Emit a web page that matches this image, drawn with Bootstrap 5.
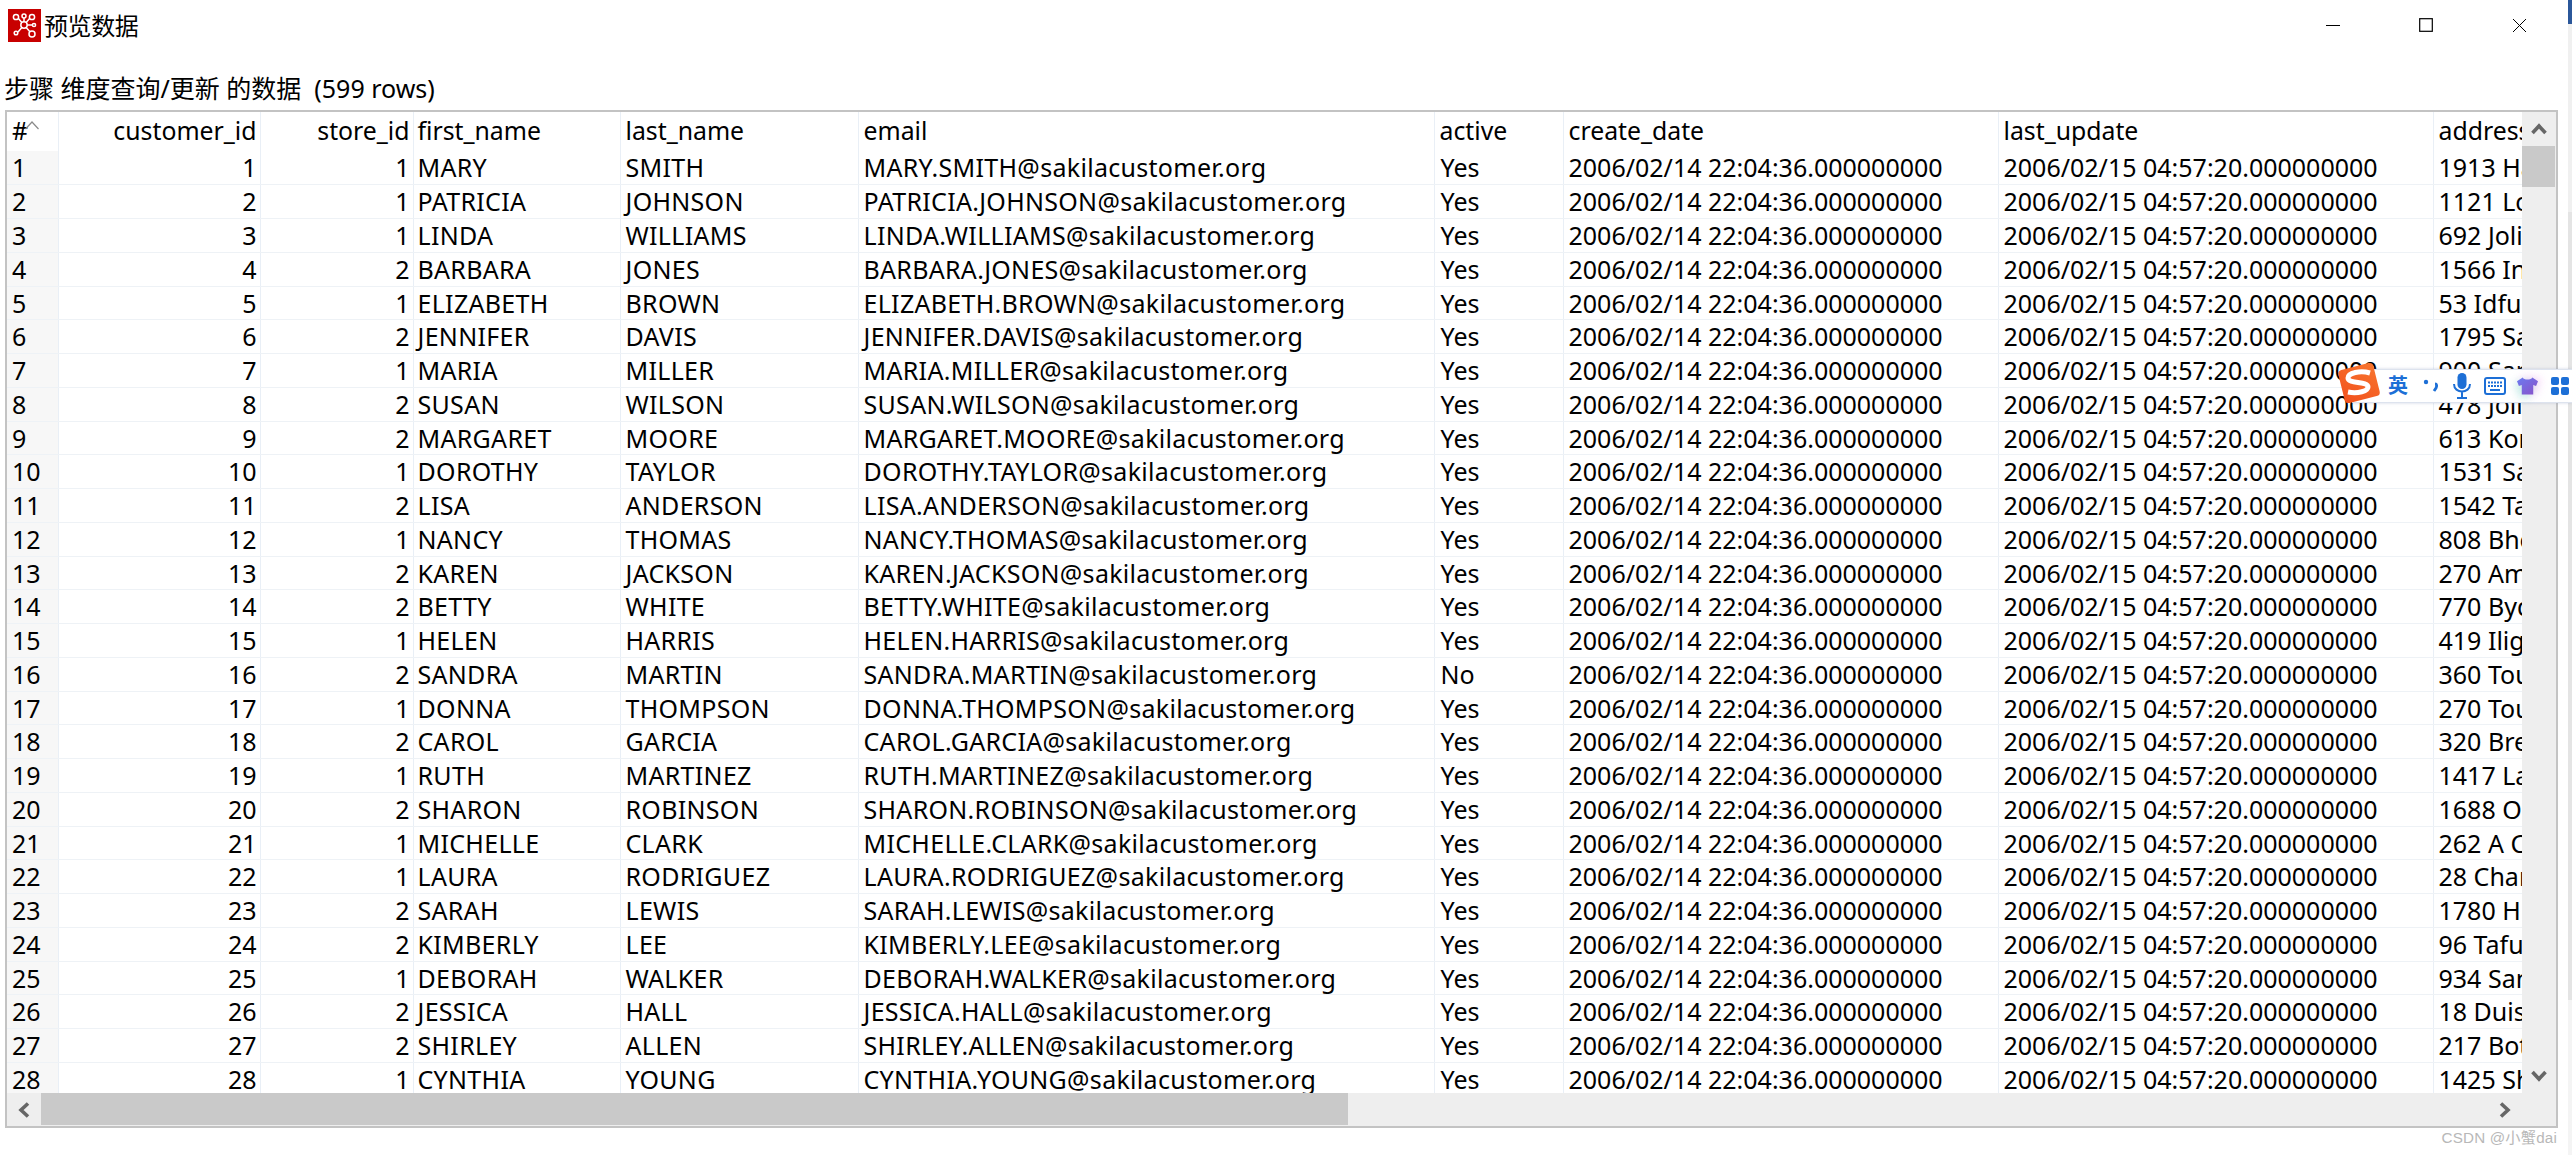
<!DOCTYPE html>
<html lang="zh">
<head>
<meta charset="utf-8">
<title>预览数据</title>
<link href="https://cdn.jsdelivr.net/npm/bootstrap@5.3.0/dist/css/bootstrap.min.css" rel="stylesheet">
<style>
html,body{height:100%;margin:0;background:#fff;overflow:hidden}
body{font-family:"Noto Sans","Noto Sans CJK SC",sans-serif;color:#000;position:relative}
.win-shell{width:2568px;height:1155px;position:relative}
.side-strip{position:absolute;left:2568px;top:0;width:4px;height:1155px;background:linear-gradient(#2b579a 0 24px,#f0f0f0 24px 212px,#e4e4e4 212px 1000px,#f4f4f4 1000px)}
.title-row{height:50px;padding-left:8px;padding-right:2px}
.app-mark{width:33px;height:33px;background:#c80000;flex:none}
.title-text{font-size:24px;line-height:33px;margin-left:3px;letter-spacing:-.4px}
.ctl-btn{width:93px;height:50px;display:flex;align-items:center;justify-content:center}
.step-text{font-size:25px;line-height:34px;height:60px;padding:21px 0 0 4px;white-space:pre}
.grid-frame{margin-left:5px;width:2553px;height:1018px;border:2px solid #c3c3c3;position:relative;display:grid;grid-template-columns:2515px 34px;grid-template-rows:981px 33px}
.grid-view{overflow:hidden;grid-column:1;grid-row:1}
.data-tbl{table-layout:fixed;width:2515px;border-collapse:collapse;font-size:25px;margin:0}
.data-tbl th,.data-tbl td{padding:0 3px 0 5px;font-weight:400;white-space:nowrap;overflow:hidden;border-right:1px solid #e9eff6;border-bottom:1px solid #eef2f6;line-height:32px;height:33.75px;background:#fff;box-shadow:none;color:#000}
.data-tbl th{height:39px;border-bottom:0;font-size:24.8px;padding-bottom:3px;vertical-align:middle}
.data-tbl td:first-child{background:#f7f7f7}
.data-tbl .num{text-align:right}
.data-tbl td:nth-child(4),.data-tbl td:nth-child(5),.data-tbl td:nth-child(6){letter-spacing:.3px}
.data-tbl td:nth-child(4),.data-tbl th:nth-child(4){padding-left:4px}
.data-tbl td:nth-child(7){padding-left:6px}
.data-tbl td:last-child,.data-tbl th:last-child{border-right:0;padding-right:0}
.sort-mark{position:absolute;left:18px;top:9px}
.vbar{grid-column:2;grid-row:1/3;background:#eee;position:relative}
.hbar{grid-column:1;grid-row:2;background:#eee;position:relative}
.vthumb{position:absolute;left:0;right:1px;top:34px;height:41px;background:#c9c9c9}
.hthumb{position:absolute;left:34px;width:1307px;top:0;height:32px;background:#c9c9c9}
.arrow-glyph{position:absolute}
.ime-bar{position:absolute;left:2352px;top:369px;width:220px;height:34px;background:#fff;border:1px solid #dde3ee;border-right:0;display:flex;align-items:center;box-shadow:0 0 3px rgba(120,140,180,.35)}
.ime-logo{position:absolute;left:2336px;top:360px;width:46px;height:46px}
.ime-word{color:#1d6fd6;font-size:20px;font-weight:700;margin-left:35px;width:20px;line-height:1}
.ime-item{flex:none}
.shirt-glow{filter:drop-shadow(-3px 3px 4px rgba(120,230,200,.45)) drop-shadow(3px -1px 4px rgba(240,140,240,.4))}
.mark-text{position:absolute;right:11px;top:1128px;font-size:15.2px;line-height:20px;color:#b8b8b8;font-family:"Liberation Sans","Noto Sans CJK SC",sans-serif;letter-spacing:.2px}
</style>
</head>
<body>
<div class="win-shell">
  <div class="title-row d-flex align-items-center justify-content-between">
    <div class="d-flex align-items-center">
      <div class="app-mark d-flex align-items-center justify-content-center">
        <svg width="27" height="27" viewBox="0 0 27 27" fill="none" stroke="#fff" stroke-width="1.500"><path d="M13 13 7 6M13 13l6-7M13 13H23M13 13 7 20M13 13l7 8M13 13V5"/><circle cx="5" cy="5" r="2.600" fill="#c80000"/><circle cx="13" cy="4" r="2" fill="#c80000"/><circle cx="21" cy="5" r="2.600" fill="#c80000"/><circle cx="13" cy="13" r="3.200" fill="#c80000"/><circle cx="23" cy="13" r="1.600" fill="#c80000"/><circle cx="5" cy="21" r="1.800" fill="#c80000"/><circle cx="21" cy="22" r="3" fill="#c80000"/></svg>
      </div>
      <div class="title-text">预览数据</div>
    </div>
    <div class="d-flex" id="ctls">
      <div class="ctl-btn"><svg width="15" height="15" viewBox="0 0 15 15"><path d="M0 7.500h14" stroke="#000" stroke-width="1"/></svg></div>
      <div class="ctl-btn"><svg width="15" height="15" viewBox="0 0 15 15" fill="none"><rect x=".7" y=".7" width="12.600" height="12.600" stroke="#000" stroke-width="1.200"/></svg></div>
      <div class="ctl-btn"><svg width="15" height="15" viewBox="0 0 15 15"><path d="M1 1l13 13M14 1 1 14" stroke="#000" stroke-width="1"/></svg></div>
    </div>
  </div>
  <div class="step-text">步骤 维度查询/更新 的数据  (599 rows)</div>
  <div class="grid-frame">
    <div class="grid-view">
      <table class="table data-tbl" id="tbl">
        <colgroup><col style="width:51px"><col style="width:202px"><col style="width:153px"><col style="width:207px"><col style="width:238px"><col style="width:576px"><col style="width:129px"><col style="width:435px"><col style="width:435px"><col style="width:89px"></colgroup>
        <thead><tr><th>#</th><th class="num">customer_id</th><th class="num">store_id</th><th>first_name</th><th>last_name</th><th>email</th><th>active</th><th>create_date</th><th>last_update</th><th>address</th></tr></thead>
        <tbody id="rows"></tbody>
      </table>
    </div>
    <svg class="sort-mark" width="14" height="9" viewBox="0 0 14 9" fill="none"><path d="M.5 8 7 1l6.500 7" stroke="#8a8a8a" stroke-width="1.200"/></svg>
    <div class="hbar">
      <div class="hthumb"></div>
      <svg class="arrow-glyph" style="left:10px;top:9px" width="14" height="16" viewBox="0 0 14 16"><path d="M11 1.500 4 8l7 6.500" fill="none" stroke="#666" stroke-width="3.600"/></svg>
      <svg class="arrow-glyph" style="left:2491px;top:9px" width="14" height="16" viewBox="0 0 14 16"><path d="M3 1.500 10 8l-7 6.500" fill="none" stroke="#666" stroke-width="3.600"/></svg>
    </div>
    <div class="vbar">
      <div class="vthumb"></div>
      <svg class="arrow-glyph" style="left:9px;top:10px" width="16" height="14" viewBox="0 0 16 14"><path d="M1.500 11 8 4l6.500 7" fill="none" stroke="#666" stroke-width="3.600"/></svg>
      <svg class="arrow-glyph" style="left:9px;top:957px" width="16" height="14" viewBox="0 0 16 14"><path d="M1.500 3 8 10l6.500-7" fill="none" stroke="#666" stroke-width="3.600"/></svg>
    </div>
  </div>
  <div class="mark-text">CSDN @小蟹dai</div>
</div>
<div class="side-strip"></div>
<div class="ime-bar">
  <span class="ime-word">英</span>
  <svg class="ime-item" style="margin-left:14px" width="24" height="22" viewBox="0 0 24 22"><circle cx="4" cy="7" r="2.200" fill="#1d6fd6"/><path d="M13 9c2 0 2 2 1 4l-2 3" fill="none" stroke="#1d6fd6" stroke-width="2.800"/></svg>
  <svg class="ime-item" style="margin-left:6px" width="20" height="28" viewBox="0 0 20 28" fill="none"><rect x="5.500" y="1" width="9" height="16" rx="4.500" fill="#1d6fd6"/><path d="M2 12c0 10 16 10 16 0M10 20v5M5 26h10" stroke="#1d6fd6" stroke-width="2"/></svg>
  <svg class="ime-item" style="margin-left:12px" width="22" height="18" viewBox="0 0 22 18" fill="none"><rect x="1" y="1" width="20" height="16" rx="2" stroke="#1d6fd6" stroke-width="2"/><path d="M4 5.500h14M4 9h14" stroke="#1d6fd6" stroke-width="2" stroke-dasharray="2 1"/><path d="M6 13h10" stroke="#1d6fd6" stroke-width="2"/></svg>
  <svg class="ime-item shirt-glow" style="margin-left:11px" width="21" height="20" viewBox="0 0 22 20"><defs><linearGradient id="shirtg" x1="0" y1="0" x2="1" y2="1"><stop offset="0" stop-color="#6b7cf0"/><stop offset="1" stop-color="#8a4fc8"/></linearGradient></defs><path d="M6 1 0 5l2 5 3-1v10h12V9l3 1 2-5-6-4c-1 3-9 3-10 0z" fill="url(#shirtg)"/></svg>
  <svg class="ime-item" style="margin-left:13px" width="18" height="18" viewBox="0 0 18 18" fill="#1d6fd6"><rect width="8" height="8" rx="2"/><rect x="10" width="8" height="8" rx="2"/><rect y="10" width="8" height="8" rx="2"/><rect x="10" y="10" width="8" height="8" rx="2"/></svg>
</div>
<svg class="ime-logo" viewBox="0 0 46 46"><defs><linearGradient id="sgg" x1="0" y1="1" x2="1" y2="0"><stop offset="0" stop-color="#f2501c"/><stop offset="1" stop-color="#f8762f"/></linearGradient></defs><rect x="5" y="6" width="36" height="34" rx="4" transform="rotate(-14 23 23)" fill="url(#sgg)"/><path d="M34 13C24 10 12 13 12 18c0 6 20 3 20 9 0 4-10 7-20 5" fill="none" stroke="#fff" stroke-width="5"/></svg>
<script>
var d=`MARY SMITH 1 1913 Hanoi Way
PATRICIA JOHNSON 1 1121 Loja Avenue
LINDA WILLIAMS 1 692 Joliet Street
BARBARA JONES 2 1566 Inegl Manor
ELIZABETH BROWN 1 53 Idfu Parkway
JENNIFER DAVIS 2 1795 Santiago
MARIA MILLER 1 900 Santiago
SUSAN WILSON 2 478 Joliet Way
MARGARET MOORE 2 613 Korolev Drive
DOROTHY TAYLOR 1 1531 Sal Drive
LISA ANDERSON 2 1542 Tarlac Parkway
NANCY THOMAS 1 808 Bhopal Manor
KAREN JACKSON 2 270 Amroha Parkway
BETTY WHITE 2 770 Bydgoszcz Avenue
HELEN HARRIS 1 419 Iligan Lane
SANDRA MARTIN 2 360 Toulouse Parkway
DONNA THOMPSON 1 270 Toulon Boulevard
CAROL GARCIA 2 320 Brest Avenue
RUTH MARTINEZ 1 1417 Lancaster Avenue
SHARON ROBINSON 2 1688 Okara Way
MICHELLE CLARK 1 262 A Corua Parkway
LAURA RODRIGUEZ 1 28 Charlotte Amalie
SARAH LEWIS 2 1780 Hino Boulevard
KIMBERLY LEE 2 96 Tafuna Way
DEBORAH WALKER 1 934 San Felipe
JESSICA HALL 2 18 Duisburg Boulevard
SHIRLEY ALLEN 2 217 Botshabelo Place
CYNTHIA YOUNG 1 1425 Shikarpur Manor`.split("\n");
var h="";
d.forEach(function(l,i){
 var p=l.split(" "),n=i+1,a=p.slice(3).join(" ");
 h+="<tr><td>"+n+"</td><td class='num'>"+n+"</td><td class='num'>"+p[2]+"</td><td>"+p[0]+"</td><td>"+p[1]+"</td><td>"+p[0]+"."+p[1]+"@sakilacustomer.org</td><td>"+(n==16?"No":"Yes")+"</td><td>2006/02/14 22:04:36.000000000</td><td>2006/02/15 04:57:20.000000000</td><td>"+a+"</td></tr>";
});
document.getElementById("rows").innerHTML=h;
</script>
<script src="https://cdn.jsdelivr.net/npm/bootstrap@5.3.0/dist/js/bootstrap.bundle.min.js"></script>
</body>
</html>
